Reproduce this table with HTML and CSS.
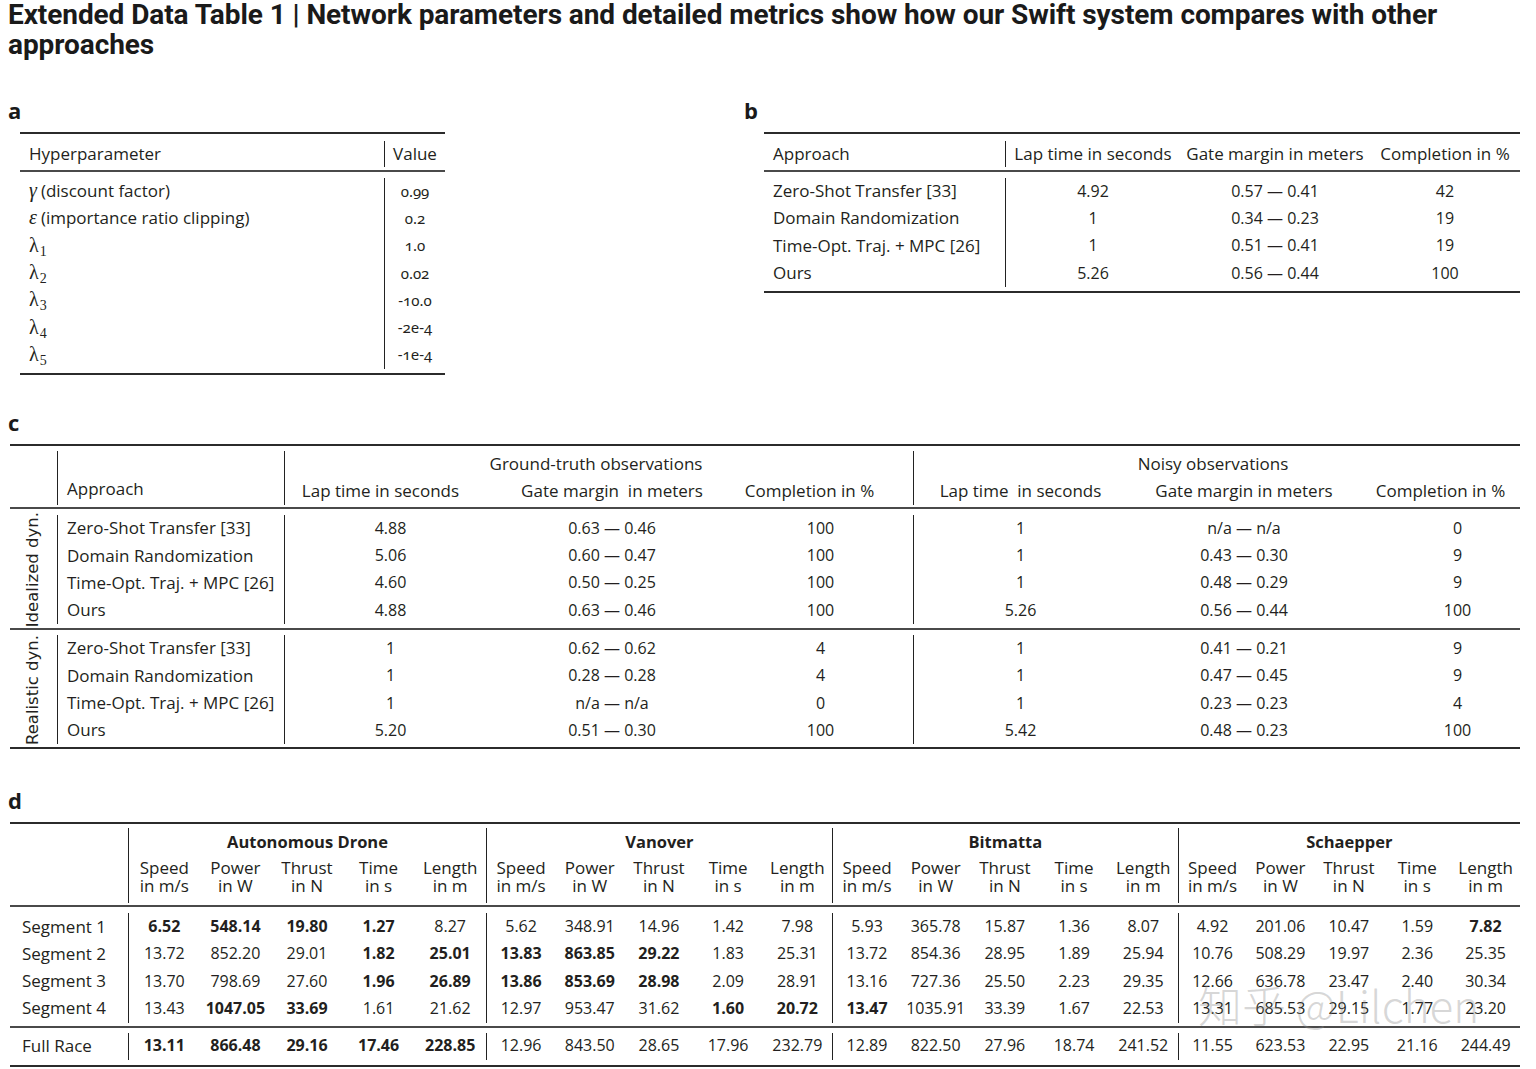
FILE: index.html
```html
<!DOCTYPE html>
<html lang="en">
<head>
<meta charset="utf-8">
<title>Extended Data Table 1</title>
<link rel="stylesheet" href="styles.css">
</head>
<body>
<h1 class="title">Extended Data Table 1 | Network parameters and detailed metrics show how our Swift system compares with other approaches</h1>

<div class="top">
  <section class="panel pa">
    <div class="lbl">a</div>
    <div class="tbl ta">
      <div class="thead">
        <div class="c first">Hyperparameter</div>
        <div class="c ctr vl">Value</div>
      </div>
      <div class="tbody">
        <div class="c first"><i class="m">γ</i> (discount factor)</div><div class="c ctr vl osn">0.99</div>
        <div class="c first"><i class="m">ε</i> (importance ratio clipping)</div><div class="c ctr vl osn">0.2</div>
        <div class="c first"><span class="m">λ<sub>1</sub></span></div><div class="c ctr vl osn">1.0</div>
        <div class="c first"><span class="m">λ<sub>2</sub></span></div><div class="c ctr vl osn">0.02</div>
        <div class="c first"><span class="m">λ<sub>3</sub></span></div><div class="c ctr vl osn">-10.0</div>
        <div class="c first"><span class="m">λ<sub>4</sub></span></div><div class="c ctr vl osn">-2e-4</div>
        <div class="c first"><span class="m">λ<sub>5</sub></span></div><div class="c ctr vl osn">-1e-4</div>
      </div>
    </div>
  </section>

  <section class="panel pb">
    <div class="lbl">b</div>
    <div class="tbl tb">
      <div class="thead">
        <div class="c first">Approach</div>
        <div class="c ctr vl">Lap time in seconds</div>
        <div class="c ctr">Gate margin in meters</div>
        <div class="c ctr">Completion in %</div>
      </div>
      <div class="tbody">
        <div class="c first">Zero-Shot Transfer [33]</div><div class="c ctr vl n">4.92</div><div class="c ctr n">0.57 — 0.41</div><div class="c ctr n">42</div>
        <div class="c first">Domain Randomization</div><div class="c ctr vl n">1</div><div class="c ctr n">0.34 — 0.23</div><div class="c ctr n">19</div>
        <div class="c first">Time-Opt. Traj. + MPC [26]</div><div class="c ctr vl n">1</div><div class="c ctr n">0.51 — 0.41</div><div class="c ctr n">19</div>
        <div class="c first">Ours</div><div class="c ctr vl n">5.26</div><div class="c ctr n">0.56 — 0.44</div><div class="c ctr n">100</div>
      </div>
    </div>
  </section>
</div>

<section class="panel pc">
  <div class="lbl">c</div>
  <div class="tbl tc">
    <div class="thead">
      <div class="c h-empty"></div>
      <div class="c h-appr vl">Approach</div>
      <div class="c grp vl gt">Ground-truth observations</div>
      <div class="c grp vl ns">Noisy observations</div>
      <div class="c ctr vl hl">Lap time in seconds</div>
      <div class="c ctr">Gate margin&nbsp; in meters</div>
      <div class="c ctr hc">Completion in %</div>
      <div class="c ctr vl">Lap time&nbsp; in seconds</div>
      <div class="c ctr">Gate margin in meters</div>
      <div class="c ctr">Completion in %</div>
    </div>
    <div class="tbody">
      <div class="c rot"><span>Idealized dyn.</span></div>
      <div class="c first vl">Zero-Shot Transfer [33]</div><div class="c ctr vl n">4.88</div><div class="c ctr n">0.63 — 0.46</div><div class="c ctr n">100</div><div class="c ctr vl n">1</div><div class="c ctr n">n/a — n/a</div><div class="c ctr nc n">0</div>
      <div class="c first vl">Domain Randomization</div><div class="c ctr vl n">5.06</div><div class="c ctr n">0.60 — 0.47</div><div class="c ctr n">100</div><div class="c ctr vl n">1</div><div class="c ctr n">0.43 — 0.30</div><div class="c ctr nc n">9</div>
      <div class="c first vl">Time-Opt. Traj. + MPC [26]</div><div class="c ctr vl n">4.60</div><div class="c ctr n">0.50 — 0.25</div><div class="c ctr n">100</div><div class="c ctr vl n">1</div><div class="c ctr n">0.48 — 0.29</div><div class="c ctr nc n">9</div>
      <div class="c first vl">Ours</div><div class="c ctr vl n">4.88</div><div class="c ctr n">0.63 — 0.46</div><div class="c ctr n">100</div><div class="c ctr vl n">5.26</div><div class="c ctr n">0.56 — 0.44</div><div class="c ctr nc n">100</div>
    </div>
    <div class="tbody mid">
      <div class="c rot"><span>Realistic dyn.</span></div>
      <div class="c first vl">Zero-Shot Transfer [33]</div><div class="c ctr vl n">1</div><div class="c ctr n">0.62 — 0.62</div><div class="c ctr n">4</div><div class="c ctr vl n">1</div><div class="c ctr n">0.41 — 0.21</div><div class="c ctr nc n">9</div>
      <div class="c first vl">Domain Randomization</div><div class="c ctr vl n">1</div><div class="c ctr n">0.28 — 0.28</div><div class="c ctr n">4</div><div class="c ctr vl n">1</div><div class="c ctr n">0.47 — 0.45</div><div class="c ctr nc n">9</div>
      <div class="c first vl">Time-Opt. Traj. + MPC [26]</div><div class="c ctr vl n">1</div><div class="c ctr n">n/a — n/a</div><div class="c ctr n">0</div><div class="c ctr vl n">1</div><div class="c ctr n">0.23 — 0.23</div><div class="c ctr nc n">4</div>
      <div class="c first vl">Ours</div><div class="c ctr vl n">5.20</div><div class="c ctr n">0.51 — 0.30</div><div class="c ctr n">100</div><div class="c ctr vl n">5.42</div><div class="c ctr n">0.48 — 0.23</div><div class="c ctr nc n">100</div>
    </div>
  </div>
</section>

<section class="panel pd">
  <div class="lbl">d</div>
  <div class="tbl td">
    <div class="thead">
      <div class="c d-empty"></div>
      <div class="c dgrp vl g1">Autonomous Drone</div>
      <div class="c dgrp vl g2">Vanover</div>
      <div class="c dgrp vl g3">Bitmatta</div>
      <div class="c dgrp vl g4">Schaepper</div>

      <div class="c sub vl">Speed<br>in m/s</div><div class="c sub">Power<br>in W</div><div class="c sub">Thrust<br>in N</div><div class="c sub">Time<br>in s</div><div class="c sub">Length<br>in m</div>
      <div class="c sub vl">Speed<br>in m/s</div><div class="c sub">Power<br>in W</div><div class="c sub">Thrust<br>in N</div><div class="c sub">Time<br>in s</div><div class="c sub">Length<br>in m</div>
      <div class="c sub vl">Speed<br>in m/s</div><div class="c sub">Power<br>in W</div><div class="c sub">Thrust<br>in N</div><div class="c sub">Time<br>in s</div><div class="c sub">Length<br>in m</div>
      <div class="c sub vl">Speed<br>in m/s</div><div class="c sub">Power<br>in W</div><div class="c sub">Thrust<br>in N</div><div class="c sub">Time<br>in s</div><div class="c sub">Length<br>in m</div>
    </div>
    <div class="tbody">
      <div class="c rl">Segment 1</div>
      <div class="c ctr vl b">6.52</div><div class="c ctr b">548.14</div><div class="c ctr b">19.80</div><div class="c ctr b">1.27</div><div class="c ctr">8.27</div>
      <div class="c ctr vl">5.62</div><div class="c ctr">348.91</div><div class="c ctr">14.96</div><div class="c ctr">1.42</div><div class="c ctr">7.98</div>
      <div class="c ctr vl">5.93</div><div class="c ctr">365.78</div><div class="c ctr">15.87</div><div class="c ctr">1.36</div><div class="c ctr">8.07</div>
      <div class="c ctr vl">4.92</div><div class="c ctr">201.06</div><div class="c ctr">10.47</div><div class="c ctr">1.59</div><div class="c ctr b">7.82</div>

      <div class="c rl">Segment 2</div>
      <div class="c ctr vl">13.72</div><div class="c ctr">852.20</div><div class="c ctr">29.01</div><div class="c ctr b">1.82</div><div class="c ctr b">25.01</div>
      <div class="c ctr vl b">13.83</div><div class="c ctr b">863.85</div><div class="c ctr b">29.22</div><div class="c ctr">1.83</div><div class="c ctr">25.31</div>
      <div class="c ctr vl">13.72</div><div class="c ctr">854.36</div><div class="c ctr">28.95</div><div class="c ctr">1.89</div><div class="c ctr">25.94</div>
      <div class="c ctr vl">10.76</div><div class="c ctr">508.29</div><div class="c ctr">19.97</div><div class="c ctr">2.36</div><div class="c ctr">25.35</div>

      <div class="c rl">Segment 3</div>
      <div class="c ctr vl">13.70</div><div class="c ctr">798.69</div><div class="c ctr">27.60</div><div class="c ctr b">1.96</div><div class="c ctr b">26.89</div>
      <div class="c ctr vl b">13.86</div><div class="c ctr b">853.69</div><div class="c ctr b">28.98</div><div class="c ctr">2.09</div><div class="c ctr">28.91</div>
      <div class="c ctr vl">13.16</div><div class="c ctr">727.36</div><div class="c ctr">25.50</div><div class="c ctr">2.23</div><div class="c ctr">29.35</div>
      <div class="c ctr vl">12.66</div><div class="c ctr">636.78</div><div class="c ctr">23.47</div><div class="c ctr">2.40</div><div class="c ctr">30.34</div>

      <div class="c rl">Segment 4</div>
      <div class="c ctr vl">13.43</div><div class="c ctr b">1047.05</div><div class="c ctr b">33.69</div><div class="c ctr">1.61</div><div class="c ctr">21.62</div>
      <div class="c ctr vl">12.97</div><div class="c ctr">953.47</div><div class="c ctr">31.62</div><div class="c ctr b">1.60</div><div class="c ctr b">20.72</div>
      <div class="c ctr vl b">13.47</div><div class="c ctr">1035.91</div><div class="c ctr">33.39</div><div class="c ctr">1.67</div><div class="c ctr">22.53</div>
      <div class="c ctr vl">13.31</div><div class="c ctr">685.53</div><div class="c ctr">29.15</div><div class="c ctr">1.77</div><div class="c ctr">23.20</div>
    </div>
    <div class="tbody mid full">
      <div class="c rl">Full Race</div>
      <div class="c ctr vl b">13.11</div><div class="c ctr b">866.48</div><div class="c ctr b">29.16</div><div class="c ctr b">17.46</div><div class="c ctr b">228.85</div>
      <div class="c ctr vl">12.96</div><div class="c ctr">843.50</div><div class="c ctr">28.65</div><div class="c ctr">17.96</div><div class="c ctr">232.79</div>
      <div class="c ctr vl">12.89</div><div class="c ctr">822.50</div><div class="c ctr">27.96</div><div class="c ctr">18.74</div><div class="c ctr">241.52</div>
      <div class="c ctr vl">11.55</div><div class="c ctr">623.53</div><div class="c ctr">22.95</div><div class="c ctr">21.16</div><div class="c ctr">244.49</div>
    </div>
    <div class="wm">知乎 @Lilchen</div>
  </div>
</section>
</body>
</html>
```

FILE: styles.css
```css
* { box-sizing: border-box; }

body {
  margin: 0;
  background: #ffffff;
  color: #231f20;
  font-family: "Open Sans", "Noto Sans", sans-serif;
  font-size: 17px;
}

.title {
  margin: 0;
  padding-left: 8px;
  font-family: "Liberation Sans Narrow", "Roboto", sans-serif;
  font-weight: 700;
  font-size: 28px;
  line-height: 30px;
  letter-spacing: -0.08px;
  color: #1a1a1a;
}

.top {
  display: flex;
  margin-top: 38px;
}

.lbl {
  font-family: "Open Sans", sans-serif;
  font-weight: 700;
  font-size: 22px;
  line-height: 24px;
  height: 24px;
  margin-bottom: 10px;
  color: #1a1a1a;
}

.pa { width: 445px; padding-left: 8px; }
.pa .tbl { margin-left: 12px; width: 425px; }

.pb { margin-left: 299px; }
.pb .tbl { margin-left: 20px; width: 756px; }

.pc { padding-left: 8px; margin-top: 35px; }
.pc .tbl { margin-left: 2px; width: 1510px; }

.pd { padding-left: 8px; margin-top: 39px; }
.pd .tbl { margin-left: 2px; width: 1510px; }

.tbl {
  position: relative;
  border-top: 2px solid #2b2b2b;
  border-bottom: 2px solid #2b2b2b;
}

.thead {
  display: grid;
  padding: 7px 0 3px;
  border-bottom: 2px solid #4a4a4a;
  grid-auto-rows: 26px;
}

.tbody {
  display: grid;
  padding: 6px 0 4px;
  grid-auto-rows: 27.3px;
}

.tbody.mid { border-top: 2px solid #4a4a4a; }

.c {
  display: flex;
  align-items: center;
  white-space: nowrap;
  padding-bottom: 2px;
}

.n { font-size: 16px; }

.ctr { justify-content: center; }
.first { padding-left: 9px; }
.vl { border-left: 1px solid #222; }

/* table a */
.ta .thead, .ta .tbody { grid-template-columns: 364px 61px; }
.m {
  font-family: "Liberation Serif", "DejaVu Serif", serif;
  font-size: 20px;
  margin-right: 4px;
}
.m sub { font-size: 14px; vertical-align: -4px; line-height: 0; margin-left: 1px; }
.osn {
  font-family: "Noto Sans", sans-serif;
  font-variant-numeric: oldstyle-nums;
  font-size: 15px;
}

/* table b */
.tb .thead, .tb .tbody { grid-template-columns: 241px 175px 190px 150px; }

/* table c */
.tc .thead, .tc .tbody {
  grid-template-columns: 47px 227px 212px 232px 185px 214px 234px 159px;
}
.tc .thead { padding: 5px 0 2px; grid-auto-rows: 27px; }
.tc .h-empty { grid-column: 1; grid-row: 1 / span 2; }
.tc .h-appr { grid-column: 2; grid-row: 1 / span 2; align-items: flex-end; padding: 0 0 5px 9px; }
.tc .gt { grid-column: 3 / span 3; grid-row: 1; justify-content: center; padding-right: 6px; }
.tc .ns { grid-column: 6 / span 3; grid-row: 1; justify-content: center; padding-right: 8px; }
.tc .hl { padding-right: 20px; }
.tc .hc { padding-right: 22px; }
.tc .nc { padding-left: 34px; }
.tc .tbody { padding: 6px 0 4px; }
.tc .tbody.mid { padding: 5px 0 3px; }

.rot {
  grid-column: 1;
  grid-row: 1 / span 4;
  justify-content: center;
  align-items: center;
  overflow: visible;
  padding-bottom: 0;
}
.rot span {
  writing-mode: vertical-rl;
  transform: rotate(180deg);
  font-family: "DejaVu Sans", sans-serif;
  font-size: 16.5px;
  line-height: 1;
  white-space: nowrap;
}

/* table d */
.td .thead, .td .tbody {
  grid-template-columns: 118px repeat(5, 71.6px) repeat(10, 69.2px) repeat(5, 68.4px);
}
.td .thead {
  padding: 4px 0 2px;
  grid-auto-rows: auto;
  grid-template-rows: 28px 47px;
}
.td .d-empty { grid-column: 1; grid-row: 1 / span 2; }
.td .dgrp {
  grid-row: 1;
  justify-content: center;
  font-weight: 700;
  font-size: 16.5px;
}
.td .g1 { grid-column: 2 / span 5; }
.td .g2 { grid-column: 7 / span 5; }
.td .g3 { grid-column: 12 / span 5; }
.td .g4 { grid-column: 17 / span 5; }
.td .sub {
  grid-row: 2;
  justify-content: center;
  text-align: center;
  line-height: 18px;
  padding-bottom: 5px;
}
.td .tbody { padding: 6px 0 3px; font-size: 16px; }
.td .tbody.full { padding: 5px 0 5px; }
.rl { padding-left: 12px; font-size: 17px; }
.b { font-weight: 700; }

.wm {
  position: absolute;
  left: 1188px;
  top: 158px;
  font-family: "Noto Sans CJK SC", "Open Sans", sans-serif;
  font-size: 44px;
  font-weight: 300;
  line-height: 1;
  color: rgba(140, 140, 140, 0.35);
  white-space: nowrap;
  pointer-events: none;
}
```
